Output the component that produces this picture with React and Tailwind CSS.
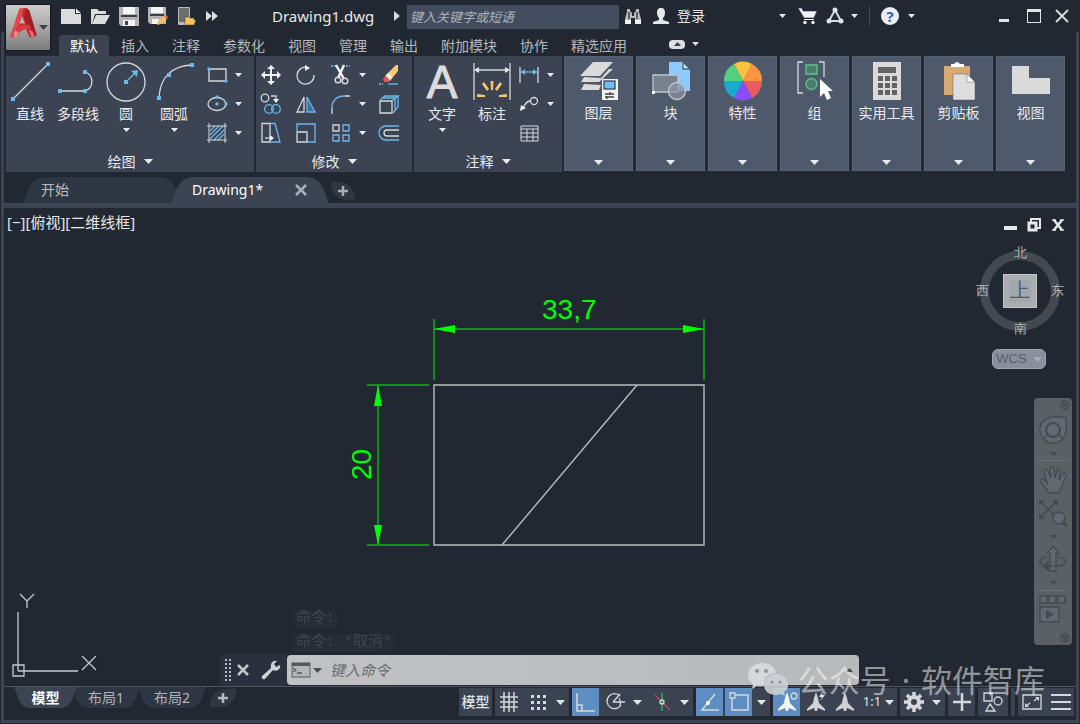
import React, { useState } from 'react';

const BLUE = '#6cb8f0';
const LIGHT = '#d6d8db';

// Shared wrapper for the line icons
function Icon({ w = 22, h = 22, vb, className = '', children }) {
  return (
    <svg
      width={w}
      height={h}
      viewBox={vb || `0 0 ${w} ${h}`}
      fill="none"
      stroke={LIGHT}
      strokeWidth="1.3"
      className={`shrink-0 ${className}`}
      aria-hidden="true"
    >
      {children}
    </svg>
  );
}

function Caret({ big, className = '' }) {
  return (
    <svg width={big ? 9 : 7} height={big ? 5 : 4} viewBox="0 0 10 5" preserveAspectRatio="none" className={`shrink-0 ${className}`} aria-hidden="true">
      <path d="M0 0H10L5 5Z" fill="currentColor" />
    </svg>
  );
}

function Dots({ at, r = 2 }) {
  return at.map(([x, y]) => (
    <rect key={`${x}-${y}`} x={x - r} y={y - r} width={r * 2} height={r * 2} fill={BLUE} stroke="none" />
  ));
}

/* ---------- Title bar icons ---------- */
const quickAccess = [
  {
    name: '新建',
    icon: (
      <Icon w={20} h={20} className="stroke-none">
        <path d="M0 3H14V8H20V18H0Z" fill="#dcdcdc" />
        <path d="M15 2.500L20 7H15Z" fill="#f4f4f4" />
      </Icon>
    ),
  },
  {
    name: '打开',
    icon: (
      <Icon w={20} h={20} className="stroke-none">
        <path d="M1 18V3H7L9 5H16V8H5L2 18Z" fill="#dcdcdc" />
        <path d="M6 9H20L15 18H2Z" fill="#dcdcdc" />
      </Icon>
    ),
  },
  {
    name: '保存',
    icon: (
      <Icon w={20} h={20} className="stroke-none">
        <path d="M0 1H20V20H2L0 18Z" fill="#b4b4b4" />
        <rect x="4" y="1" width="12" height="7" fill="#f5f5f5" />
        <rect x="2" y="9" width="16" height="2" fill="#3a3f48" />
        <rect x="4" y="14" width="12" height="6" fill="#f5f5f5" />
        <rect x="6" y="15" width="3" height="4" fill="#3a3f48" />
      </Icon>
    ),
  },
  {
    name: '另存为',
    icon: (
      <Icon w={20} h={20} className="stroke-none">
        <path d="M0 1H18V18H2L0 16Z" fill="#b4b4b4" />
        <rect x="3" y="1" width="12" height="6" fill="#f5f5f5" />
        <rect x="2" y="8" width="14" height="2" fill="#3a3f48" />
        <rect x="4" y="13" width="7" height="5" fill="#f5f5f5" />
        <path d="M9 19L10 15L16 10L19 13L13 18Z" fill="#f3bf62" />
        <path d="M16 10L18 9L20 11L19 13Z" fill="#e25c5c" />
      </Icon>
    ),
  },
  {
    name: '从移动设备打开',
    icon: (
      <Icon w={20} h={20} className="stroke-none">
        <rect x="1" y="1" width="12" height="18" rx="1" fill="#b8b8b8" />
        <rect x="2" y="2" width="10" height="14" fill="#6d6d6d" />
        <path d="M8 19V11H12L13 12H17V14H19L17 19Z" fill="#f3c263" stroke="#4b3d20" strokeWidth="0.5" />
      </Icon>
    ),
  },
];

function LogoButton() {
  return (
    <button
      aria-label="应用程序菜单"
      className="absolute left-[5px] top-1 z-10 flex h-[47px] w-[46px] items-center border border-[#15181d] bg-linear-to-b from-[#cdcdcd] via-[#a9a9a9] to-[#7b7b7b] pl-[3px]"
    >
      <svg width="30" height="33" viewBox="0 0 32 36" className="mb-2 shrink-0" aria-hidden="true">
        <path d="M11 2L19 1L29 32L22 33L18 24L12 24L8 32L1 33Z" fill="#c32a2f" />
        <path d="M11 2L15 1L14 11L11 20Q6 24 6 33L1 33Z" fill="#e0484b" />
        <path d="M19 1L22 4L30 31L24 33L16 11Z" fill="#a71d24" />
        <path d="M14 10L17 18H11Z" fill="#b6b6b6" />
        <path d="M7 25Q14 17 22 20L24 25Q15 21 8 32L3 33Z" fill="#d93a3f" />
        <path d="M6 26Q4 30 5 33L9 32L10 27Z" fill="#eb8d8b" />
        <path d="M21 25L24 33L28 32L25 26Z" fill="#e2686a" />
      </svg>
      <Caret big className="text-[#3e4248]" />
    </button>
  );
}

function TitleBar() {
  return (
    <header className="flex h-8 items-center pl-[60px] pr-[10px] text-[#e6e8ea]">
      <div className="flex items-center gap-[9px]">
        {quickAccess.map((q) => (
          <button key={q.name} aria-label={q.name}>{q.icon}</button>
        ))}
        <button aria-label="更多">
          <Icon w={12} h={12} className="stroke-none">
            <path d="M0 1L6 6L0 11ZM6 1L12 6L6 11Z" fill="#dcdcdc" />
          </Icon>
        </button>
      </div>
      <h1 className="ml-[54px] w-[122px] shrink-0 text-[15px]">Drawing1.dwg</h1>
      <Icon w={6} h={10} className="stroke-none">
        <path d="M0 0L6 5L0 10Z" fill="#dcdcdc" />
      </Icon>
      <input
        aria-label="搜索"
        placeholder="键入关键字或短语"
        className="ml-[7px] mt-0.5 h-6 w-[212px] bg-[#434b5e] px-[3px] text-[13px] italic outline-none placeholder:text-[#adb2bc]"
      />
      <button aria-label="查找" className="ml-[5px]">
        <Icon w={18} h={18} className="stroke-none">
          <path d="M3 2H6V4L8 6V9H10V6L12 4V2H15V5L17 12V17H11V11H7V17H1V12L3 5Z" fill="#b9bbbe" />
          <path d="M1 13H7V17H1ZM11 13H17V17H11Z" fill="#f0f0f0" />
          <path d="M4 5H6V12H4ZM12 5H14V12H12Z" fill="#5b6068" />
        </Icon>
      </button>
      <button className="ml-[10px] flex items-center gap-[7px] text-sm">
        <Icon w={18} h={18} className="stroke-none">
          <path d="M9 1C12 1 13 3 13 6C13 8 12 10 11 11V13L17 15V17H1V15L7 13V11C6 10 5 8 5 6C5 3 6 1 9 1Z" fill="#e6e7e9" />
        </Icon>
        登录
      </button>
      <div className="ml-auto flex items-center">
        <button aria-label="登录选项"><Caret /></button>
        <button aria-label="应用商店" className="ml-3">
          <Icon w={20} h={18} className="stroke-none">
            <path d="M0 1H4L5 4H19L16 11H6Z" fill="#f2f2f5" stroke="#1c2550" strokeWidth="0.600" />
            <path d="M6 12H16V13H6Z" fill="#f2f2f5" />
            <circle cx="7" cy="15.500" r="1.700" fill="#f2f2f5" />
            <circle cx="15" cy="15.500" r="1.700" fill="#f2f2f5" />
          </Icon>
        </button>
        <button aria-label="Autodesk 链接" className="ml-2 flex items-center gap-[7px]">
          <Icon w={18} h={18} className="stroke-[2]">
            <path d="M9 3L3 14H15Z" />
            <g fill="#dfe3f2" stroke="none"><circle cx="9" cy="3" r="2.500" /><circle cx="3" cy="14" r="2.500" /><circle cx="15" cy="14" r="2.500" /></g>
          </Icon>
          <Caret />
        </button>
        <span className="ml-[11px] h-5 w-px bg-[#454c5b]" />
        <button aria-label="帮助" className="ml-[11px] flex items-center gap-[9px]">
          <span className="flex h-[18px] w-[18px] items-center justify-center rounded-full bg-[#eceef2] text-[15px] font-bold leading-none text-[#2f62b8]">?</span>
          <Caret />
        </button>
        <button aria-label="最小化" className="ml-[84px] mt-2 h-[3px] w-[10px] bg-[#e2e4e6]" />
        <button aria-label="最大化" className="ml-[18px] h-[14px] w-[14px] border border-t-[3px] border-[#e2e4e6]" />
        <button aria-label="关闭" className="ml-[14px]">
          <Icon w={14} h={14} className="stroke-[2]"><path d="M1 1L13 13M13 1L1 13" /></Icon>
        </button>
      </div>
    </header>
  );
}

const ribbonTabs = ['默认', '插入', '注释', '参数化', '视图', '管理', '输出', '附加模块', '协作', '精选应用'];

function RibbonTabs() {
  const [active, setActive] = useState('默认');
  return (
    <nav className="flex h-6 items-end gap-px pl-[55px] text-sm">
      {ribbonTabs.map((t) => (
        <button
          key={t}
          onClick={() => setActive(t)}
          className={`h-[21px] shrink-0 rounded-t-sm px-[11px] leading-5 ${t === active ? 'bg-[#3c4453] text-white' : 'text-[#b4b8be]'}`}
        >
          {t}
        </button>
      ))}
      <button aria-label="功能区显示" className="ml-[30px] flex h-6 items-center gap-[7px] text-[#dcdcdc]">
        <span className="flex h-[9px] w-4 items-center justify-center rounded-sm bg-[#dcdfe3]">
          <Caret className="rotate-180 text-[#3a3f48]" />
        </span>
        <Caret />
      </button>
    </nav>
  );
}

/* ---------- Ribbon ---------- */
function BigTool({ label, icon, caret, className = 'w-12' }) {
  return (
    <button className={`flex flex-col items-center text-sm ${className}`}>
      {icon}
      <span className="mt-0.5 leading-5">{label}</span>
      {caret && <Caret className="mt-1" />}
    </button>
  );
}

function SmallTool({ name, icon, caret }) {
  return (
    <button aria-label={name} className="flex h-[29px] items-center gap-[7px]">
      {icon}
      {caret && <Caret />}
    </button>
  );
}

function Panel({ title, className = '', children }) {
  return (
    <section className={`flex shrink-0 flex-col bg-[#3c4453] ${className}`}>
      <div className="flex flex-1">{children}</div>
      <button className="flex h-[21px] items-center justify-center gap-2 text-sm leading-5">
        {title}
        <Caret big />
      </button>
    </section>
  );
}

const drawTools = [
  {
    label: '直线',
    icon: <Icon w={40} h={40}><path d="M3 37L38 2" /><Dots at={[[3, 37], [38, 2]]} /></Icon>,
  },
  {
    label: '多段线',
    icon: <Icon w={40} h={40}><path d="M2 29H27A10 10 0 0 0 27 10" /><Dots at={[[2, 29], [27, 29], [27, 10]]} /></Icon>,
  },
  {
    label: '圆',
    caret: true,
    icon: (
      <Icon w={40} h={40}>
        <circle cx="20" cy="20" r="19" />
        <path d="M20 20L29 11" stroke={BLUE} />
        <path d="M25 9L32 8L31 15Z" fill={BLUE} stroke="none" />
        <Dots at={[[20, 20]]} />
      </Icon>
    ),
  },
  {
    label: '圆弧',
    caret: true,
    icon: (
      <Icon w={40} h={40}>
        <path d="M5 36C6 15 18 4 38 3" />
        <Dots at={[[5, 36], [15, 13], [38, 3]]} />
      </Icon>
    ),
  },
];

const drawSmall = [
  { name: '矩形', icon: <Icon><path d="M3 5H20V17H3Z" /><Dots at={[[3, 5], [20, 17]]} r={1.5} /></Icon> },
  { name: '椭圆', icon: <Icon><ellipse cx="11" cy="11" rx="9" ry="6.500" /><Dots at={[[11, 4], [11, 11], [20, 11]]} r={1.5} /></Icon> },
  {
    name: '图案填充',
    icon: (
      <Icon>
        <path d="M4 9L9 4M4 13L13 4M4 17L17 4M8 18L18 8M12 18L18 12" stroke={BLUE} />
        <path d="M3 1V21M19 1V21M1 4H21M1 18H21" strokeWidth="1" />
      </Icon>
    ),
  },
];

// Laid out row by row in a four-column grid
const modifyTools = [
  { name: '移动', icon: <Icon className="stroke-none"><path d="M10 5V10H5V7L1 11L5 15V12H10V17H7L11 21L15 17H12V12H17V15L21 11L17 7V10H12V5H15L11 1L7 5Z" fill="#f2f2f2" /></Icon> },
  { name: '旋转', icon: <Icon><path d="M13 3.500A8.500 8.500 0 1 0 19 11" /><path d="M10 1L15 4L10 7Z" fill="#f2f2f2" stroke="none" /></Icon> },
  {
    name: '修剪',
    caret: true,
    icon: (
      <Icon>
        <path d="M1 2H6M13 2H20" stroke={BLUE} strokeDasharray="2 1" />
        <path d="M6 1L14 15M14 1L8 14" strokeWidth="2.500" stroke="#f2f2f2" />
        <circle cx="8" cy="16" r="2.800" strokeWidth="1.500" /><circle cx="15" cy="17" r="2.800" strokeWidth="1.500" />
      </Icon>
    ),
  },
  {
    name: '删除',
    icon: (
      <Icon className="stroke-none">
        <path d="M20 1V7L12 17L7 12L18 1Z" fill="#f6cd76" />
        <path d="M10 9L14 13L11 17L7 13Z" fill="#f4f4f4" />
        <path d="M8 12L12 16L10 18H6L5 15Z" fill="#e8575c" />
        <path d="M1 20H5" stroke="#aaa" strokeDasharray="2 1" /><path d="M10 20H20" stroke={BLUE} />
      </Icon>
    ),
  },
  {
    name: '复制',
    icon: (
      <Icon>
        <circle cx="5" cy="5" r="3.800" /><path d="M11 3H16V7" /><path d="M13 6H19L16 10Z" fill="#f2f2f2" stroke="none" />
        <circle cx="9" cy="16" r="4.300" stroke={BLUE} /><circle cx="16" cy="16" r="4.300" stroke={BLUE} />
      </Icon>
    ),
  },
  { name: '镜像', icon: <Icon><path d="M9 4V19H2Z" /><path d="M12 4V19H20Z" stroke={BLUE} fill="#3f6d92" /></Icon> },
  { name: '圆角', caret: true, icon: <Icon><path d="M2 21V15M15 3H20" /><path d="M2 15C2 7 7 3 15 3" stroke={BLUE} /></Icon> },
  {
    name: '分解',
    icon: <Icon><path d="M2 8H14V20H2Z" /><path d="M2 7L7 3H20L14 8M20 3V14L15 20M17 6V17M5 5H17" stroke={BLUE} /></Icon>,
  },
  {
    name: '拉伸',
    icon: <Icon><path d="M10 1.500H2V20H10Z" /><path d="M10 1.500H15L20 20H10" stroke={BLUE} /><path d="M5 16H11" /><path d="M10 13L14 16L10 19Z" fill="#f2f2f2" stroke="none" /></Icon>,
  },
  { name: '缩放', icon: <Icon><path d="M2 9V2H20V20H12" stroke={BLUE} /><path d="M2 10H12V20H2Z" /></Icon> },
  {
    name: '阵列',
    caret: true,
    icon: <Icon><path d="M3 3H9V9H3Z" /><path d="M13 3H19V9H13ZM3 13H9V19H3ZM13 13H19V19H13Z" stroke={BLUE} /></Icon>,
  },
  {
    name: '偏移',
    icon: <Icon><path d="M21 4H8A7 7 0 0 0 8 18H21" stroke={BLUE} /><path d="M21 8H9A3 3 0 0 0 9 14H21" /></Icon>,
  },
];

const annotateSmall = [
  {
    name: '线性标注',
    caret: true,
    icon: <Icon><path d="M2 3V19M20 3V19" /><path d="M3 8H19" stroke={BLUE} /><path d="M3 8L7 5V11ZM19 8L15 5V11Z" fill={BLUE} stroke="none" /></Icon>,
  },
  {
    name: '引线',
    caret: true,
    icon: <Icon><circle cx="16" cy="8" r="3.500" /><path d="M12 8C8 8 8 11 4 16" /><path d="M2 18L3 12L8 15Z" fill="#f2f2f2" stroke="none" /></Icon>,
  },
  { name: '表格', icon: <Icon><path d="M3 4H20V19H3ZM3 7H20M3 11H20M3 15H20M9 7V19M15 7V19" strokeWidth="1" /></Icon> },
];

const WHEEL = [
  ['M20 20L11 3A19 19 0 0 1 29 3Z', '#ffc23f'],
  ['M20 20L29 3A19 19 0 0 1 39 20Z', '#ff9443'],
  ['M20 20H39A19 19 0 0 1 29 37Z', '#e85b5f'],
  ['M20 20L29 37A19 19 0 0 1 11 37Z', '#8a4dfc'],
  ['M20 20L11 37A19 19 0 0 1 1 20Z', '#15acd0'],
  ['M20 20H1A19 19 0 0 1 11 3Z', '#52d080'],
];

const collapsed = [
  {
    label: '图层',
    icon: (
      <Icon w={40} h={40} className="stroke-none">
        <path d="M14 1H34L21 15H1ZM5 16L2 21H20L34 8H30L22 17ZM5 23L2 29H20L22 24Z" fill="#dadada" />
        <rect x="23" y="18" width="16" height="21" fill="#f2f2f2" />
        <rect x="25" y="20" width="11" height="8" fill="#6cbcfa" stroke="#3d4655" />
        <path d="M26 33H35M26 36H35M31 31V34M28 35V38" stroke="#444" />
      </Icon>
    ),
  },
  {
    label: '块',
    icon: (
      <Icon w={40} h={40} className="stroke-none">
        <path d="M18 1H32L39 8V30H18Z" fill="#8ccaff" />
        <path d="M32 1V8H39Z" fill="#cfe8ff" stroke="#47617a" />
        <path d="M2 14H27V31H2Z" fill="#778291" stroke="#c2c5ca" />
        <circle cx="26" cy="30" r="8.500" fill="#8a94a0" fillOpacity="0.7" stroke="#c2c5ca" />
        <rect x="1" y="30" width="3" height="3" fill="#fff" />
      </Icon>
    ),
  },
  {
    label: '特性',
    icon: (
      <Icon w={40} h={40} className="stroke-none">
        {WHEEL.map(([d, c]) => <path key={c} d={d} fill={c} />)}
      </Icon>
    ),
  },
  {
    label: '组',
    icon: (
      <Icon w={40} h={40}>
        <path d="M8 1H3V32H8M24 1H29V16" />
        <path d="M11 4H22V13H11Z" stroke="#58c98b" fill="#4f7a70" />
        <circle cx="16.500" cy="23" r="5.500" stroke="#58c98b" fill="#4f7a70" />
        <path d="M25 18L38 30H33L36 37L32 39L29 32L25 36Z" fill="#fff" stroke="none" />
      </Icon>
    ),
  },
  {
    label: '实用工具',
    icon: (
      <Icon w={40} h={40} className="stroke-none">
        <rect x="6" y="1" width="28" height="38" fill="#dadada" />
        <path d="M11 6H29V12H11ZM11 15H16V20H11ZM18 15H23V20H18ZM25 15H30V20H25ZM11 22H16V27H11ZM18 22H23V27H18ZM25 22H30V27H25ZM11 29H16V34H11ZM18 29H23V34H18ZM25 29H30V34H25Z" fill="#636363" />
      </Icon>
    ),
  },
  {
    label: '剪贴板',
    icon: (
      <Icon w={40} h={40} className="stroke-none">
        <rect x="5" y="5" width="26" height="29" fill="#d8a970" />
        <path d="M12 6V3H15Q18 -1 21 3H25V6Z" fill="#fff" />
        <path d="M14 13H28L36 21V39H14Z" fill="#dedede" stroke="#5b5f66" strokeWidth="0.500" />
        <path d="M28 13V21H36Z" fill="#fff" stroke="#5b5f66" strokeWidth="0.500" />
      </Icon>
    ),
  },
  {
    label: '视图',
    icon: <Icon w={40} h={40} className="stroke-none"><path d="M1 5H18V17H39V33H1Z" fill="#dadada" /></Icon>,
  },
];

function Ribbon() {
  return (
    <div className="flex h-[116px] gap-0.5 pl-0.5 text-[#e8eaec]">
      <Panel title="绘图" className="w-[248px]">
        <div className="flex pt-1.5">
          {drawTools.map((t) => <BigTool key={t.label} {...t} />)}
        </div>
        <div className="flex flex-col pl-2 pt-1">
          {drawSmall.map((t) => <SmallTool key={t.name} caret {...t} />)}
        </div>
      </Panel>
      <Panel title="修改" className="w-[156px]">
        <div className="grid grid-cols-[35px_35px_48px_22px] content-start pl-1 pt-1">
          {modifyTools.map((t) => <SmallTool key={t.name} {...t} />)}
        </div>
      </Panel>
      <Panel title="注释" className="w-[148px]">
        <div className="flex pt-1.5">
          <BigTool
            label="文字"
            caret
            className="w-14"
            icon={
              <span className="flex h-10 items-center font-['Liberation_Sans',sans-serif] text-[46px] leading-10 text-[#dcdcdc] [-webkit-text-stroke:1px_#dcdcdc]">
                A
              </span>
            }
          />
          <BigTool
            label="标注"
            className="w-11"
            icon={
              <Icon w={40} h={40}>
                <path d="M2 1V38M38 1V38M4 8H36" />
                <path d="M2 8L7 5V11ZM38 8L33 5V11Z" fill="#e6e6e6" stroke="none" />
                <path d="M18.500 19H21.500L21 28H19ZM10 22L12 20L17 27L15 29ZM30 22L28 20L23 27L25 29ZM5 32L13 33V35H5ZM35 32L27 33V35H35Z" fill="#f6c667" stroke="none" />
              </Icon>
            }
          />
        </div>
        <div className="flex flex-col pl-1 pt-1">
          {annotateSmall.map((t) => <SmallTool key={t.name} {...t} />)}
        </div>
      </Panel>
      <div className="flex gap-[3px] pb-px">
        {collapsed.map((p) => (
          <button key={p.label} className="flex w-[69px] shrink-0 flex-col items-center border border-[#566174] bg-[#4e596c] pb-[5px] pt-1 text-sm">
            {p.icon}
            <span className="mt-0.5 leading-5">{p.label}</span>
            <Caret big className="mt-auto" />
          </button>
        ))}
      </div>
    </div>
  );
}

/* ---------- File tabs ---------- */
// The slanted sides are two overlapping skewed halves behind the label
function FileTabs() {
  return (
    <div className="flex h-9 items-end border-b-[5px] border-[#3c4453] pl-6 text-sm">
      <button className="relative h-[26px] w-[148px] pl-[13px] text-left text-[#b9bdc3] before:absolute before:inset-y-0 before:left-0 before:w-3/5 before:-skew-x-[20deg] before:rounded-tl-xl before:bg-[#2f3643] after:absolute after:inset-y-0 after:right-0 after:w-3/5 after:rounded-tr-2xl after:bg-[#2f3643]">
        <span className="relative z-10">开始</span>
      </button>
      <div className="relative flex h-[26px] w-[148px] items-center pl-4 pr-[17px] text-white before:absolute before:inset-y-0 before:left-0 before:w-3/5 before:-skew-x-[20deg] before:rounded-tl-xl before:bg-[#3c4453] after:absolute after:inset-y-0 after:right-0 after:w-3/5 after:skew-x-[20deg] after:rounded-tr-xl after:bg-[#3c4453]">
        <button className="relative z-10 shrink-0">Drawing1*</button>
        <button aria-label="关闭图形" className="relative z-10 ml-auto">
          <Icon w={12} h={12} className="stroke-[#a9aeb6] stroke-[2.5]"><path d="M1 1L11 11M11 1L1 11" /></Icon>
        </button>
      </div>
      <button aria-label="新图形" className="mb-[3px] ml-[7px] flex h-[18px] w-6 items-center justify-center rounded-bl-2xl rounded-tr-2xl bg-[#303743]">
        <Icon w={10} h={10} className="stroke-[#a9aeb6] stroke-[2.5]"><path d="M5 0V10M0 5H10" /></Icon>
      </button>
    </div>
  );
}

/* ---------- Drawing area ---------- */
function Drawing() {
  return (
    <svg width="370" height="260" viewBox="345 295 370 260" className="absolute left-[341px] top-[87px]" fill="none">
      <g stroke="#b9bbbf" strokeWidth="1.400">
        <path d="M434 385H704V545H434Z" />
        <path d="M502 545L637 385" />
      </g>
      <g stroke="#0cb414" strokeWidth="1.400">
        <path d="M434 319V380M704 319V380M434 329H704" />
        <path d="M367 385H429M367 545H429M378 385V545" />
      </g>
      <g fill="#00ff00">
        <path d="M434 329L455 325V333ZM704 329L683 325V333ZM378 385L374 406H382ZM378 545L374 525H382Z" />
        <g fontFamily="Liberation Sans, Arial, sans-serif" fontSize="28">
          <text x="542" y="319">33,7</text>
          <text transform="translate(371 480) rotate(-90)">20</text>
        </g>
      </g>
    </svg>
  );
}

function ViewCube() {
  return (
    <div className="absolute right-3 top-9 flex w-[88px] flex-col items-center font-serif">
      <div className="relative flex h-[94px] w-[88px] items-center justify-center text-[13px] text-[#b3b6ba]">
        <div className="flex h-20 w-20 items-center justify-center rounded-full border-[9px] border-[#434950]">
          <button className="flex h-[34px] w-[34px] items-center justify-center border border-[#c4c4c4] bg-[#abadae] text-[20px] leading-none text-[#54585c]">
            <span className="flex h-[22px] w-[22px] items-center justify-center bg-[#a0a8ae]">上</span>
          </button>
        </div>
        <span className="absolute top-0 leading-[18px]">北</span>
        <span className="absolute bottom-0 leading-[18px]">南</span>
        <span className="absolute left-0">西</span>
        <span className="absolute right-0">东</span>
      </div>
      <button className="mr-0.5 mt-[11px] flex h-5 w-[54px] items-center justify-center gap-1.5 rounded-md border border-[#a2a5b2] bg-[#8a8e9d] font-['Liberation_Sans',sans-serif] text-[13px] text-[#5c606c]">
        WCS
        <Caret big className="text-[#a9acb9]" />
      </button>
    </div>
  );
}

function NavBar() {
  return (
    <div className="absolute right-1 top-[190px] flex h-[247px] w-[38px] flex-col items-center rounded-sm bg-[#5b6064] text-[#454a52]">
      <button aria-label="关闭导航栏" className="mr-0.5 mt-0.5 self-end">
        <Icon w={10} h={10} className="stroke-[#454a52]"><circle cx="5" cy="5" r="4" /><path d="M3 3L7 7M7 3L3 7" /></Icon>
      </button>
      <button aria-label="全导航控制盘" className="mt-1.5 flex flex-col items-center gap-2">
        <Icon w={28} h={28} className="stroke-[#454a52]">
          <path d="M14 1H27V14A13 13 0 1 1 14 1Z" fill="#626770" /><circle cx="14" cy="14" r="7" strokeWidth="2" /><path d="M5 22L9 18M23 22L19 18" />
        </Icon>
        <Caret />
      </button>
      <hr className="my-1 w-[30px] border-[#6b7074]" />
      <button aria-label="平移">
        <Icon w={28} h={30} className="stroke-[#454a52]">
          <path d="M10 28L2 17C0 14 3 13 5 15L8 18L5 7C4 4 8 3 9 6L12 13L11 4C11 1 15 1 15 4L16 13L18 5C19 2 22 3 21 6L20 15L24 9C26 7 28 9 27 11L21 26L19 28Z" fill="#626770" />
        </Icon>
      </button>
      <button aria-label="缩放" className="mt-1 flex flex-col items-center gap-2">
        <Icon w={30} h={28} className="stroke-[#454a52]">
          <path d="M3 3L18 18M18 3L3 18" strokeWidth="1.500" /><path d="M1 1H7L1 7ZM20 1H14L20 7ZM1 20V14L7 20Z" fill="#454a52" stroke="none" />
          <circle cx="21" cy="19" r="6" fill="#626770" strokeWidth="1.500" /><path d="M25 23L29 27" strokeWidth="3" />
        </Icon>
        <Caret />
      </button>
      <button aria-label="动态观察" className="mt-1.5 flex flex-col items-center gap-2">
        <Icon w={28} h={28} className="stroke-[#454a52]">
          <path d="M11 26V8H8L14 1L20 8H17V26Z" fill="#626770" />
          <path d="M20 12C30 14 29 21 17 21H6M8 12C0 13 -1 18 4 20" strokeWidth="1.500" /><path d="M4 21L9 17V25Z" fill="#454a52" />
        </Icon>
        <Caret />
      </button>
      <hr className="mb-1 mt-[5px] w-[30px] border-[#6b7074]" />
      <button aria-label="运动演示">
        <Icon w={28} h={28} className="stroke-[#454a52]">
          <path d="M1 1H8V8H1ZM10 1H17V8H10ZM19 1H26V8H19ZM1 12H20V27H1Z" fill="#626770" strokeWidth="1.500" /><path d="M7 15V24L15 19.500Z" fill="#454a52" stroke="none" />
        </Icon>
      </button>
      <button aria-label="导航栏选项" className="mb-0.5 mr-0.5 mt-auto self-end">
        <Icon w={10} h={10} className="stroke-[#454a52]"><circle cx="5" cy="5" r="4" /><path d="M3 4H7L5 7Z" /></Icon>
      </button>
    </div>
  );
}

function CommandLine() {
  return (
    <div className="absolute bottom-0 left-[216px] right-[217px]">
      <div className="flex flex-col items-start gap-1.5 pb-0.5 pl-[73px] font-['Liberation_Mono','Noto_Sans_CJK_SC',monospace] text-[15px] leading-[18px] text-[#3f454e]">
        <p className="rounded-sm bg-[#262c35] px-[3px]">命令:</p>
        <p className="whitespace-pre rounded-sm bg-[#262c35] px-[3px]">命令: *取消*</p>
      </div>
      <div className="flex h-8">
        <div className="flex w-[67px] shrink-0 items-center rounded-tl bg-[#2a303d] pl-1">
          <Icon w={8} h={22} className="stroke-none">
            {[1, 5, 9, 13, 17, 21].map((y) => <path key={y} d={`M1 ${y - 1}H3V${y + 1}H1ZM5 ${y - 1}H7V${y + 1}H5Z`} fill="#b5b8bd" />)}
          </Icon>
          <button aria-label="关闭命令行" className="ml-[5px]">
            <Icon w={12} h={12} className="stroke-[#c3c6cb] stroke-[2.5]"><path d="M1 1L11 11M11 1L1 11" /></Icon>
          </button>
          <button aria-label="自定义" className="ml-3">
            <Icon w={20} h={20} className="stroke-none">
              <path d="M1 16L10 8C9 3 12 0 16 1L13 4L15 7L19 5C20 9 16 12 12 10L4 19C2 20 0 18 1 16Z" fill="#cfd1d4" />
            </Icon>
          </button>
        </div>
        <div className="mb-px mt-px flex flex-1 items-center rounded-sm bg-linear-to-r from-[#c1c2c4] to-[#b8b9bb] pl-1 pr-1.5 text-[#4b4f55]">
          <button aria-label="最近使用的命令" className="flex items-center gap-0.5">
            <Icon w={20} h={16}>
              <path d="M1 1H19V15H1Z" stroke="#777" fill="#b4b5b7" /><path d="M1 1H19V4H1Z" fill="#55585d" stroke="none" /><path d="M2 6L5 8L2 10M6 11H11" stroke="#55585d" />
            </Icon>
            <Caret big />
          </button>
          <input aria-label="命令" placeholder="键入命令" className="ml-2 min-w-0 flex-1 bg-transparent text-[15px] italic outline-none placeholder:text-[#696c71]" />
          <Caret className="rotate-180" />
        </div>
      </div>
    </div>
  );
}

function Viewport() {
  return (
    <main className="relative min-h-[440px] flex-1 overflow-hidden">
      <div className="absolute left-[3px] top-1 text-[15px] leading-5 text-[#e4e6e8]">[−][俯视][二维线框]</div>
      <div className="absolute right-3 top-[10px] flex h-[14px] items-center">
        <button aria-label="最小化视口" className="mt-1.5 h-1 w-[13px] bg-[#e8e8e8]" />
        <button aria-label="还原视口" className="ml-2.5">
          <Icon w={14} h={14} className="stroke-[#e8e8e8] stroke-[2]"><path d="M4 4V1H13V10H10" /><path d="M2 5H9V12H2Z" strokeWidth="3" /></Icon>
        </button>
        <button aria-label="关闭视口" className="ml-[11px]">
          <Icon w={12} h={12} className="stroke-[#e8e8e8]"><path d="M2 1L10 11M10 1L2 11" strokeWidth="2.500" /><path d="M0 1H4M8 1H12M0 11H4M8 11H12" strokeWidth="1.500" /></Icon>
        </button>
      </div>
      <Drawing />
      <ViewCube />
      <NavBar />
      {/* UCS origin marker */}
      <svg width="90" height="90" viewBox="0 0 90 90" className="absolute bottom-[3px] left-2" fill="none" stroke="#c6c8cb" strokeWidth="1.300">
        <path d="M1 72H12V83H1Z M6 78V19 M6 78H66" />
        <path d="M8 1L15 8L22 1M15 8V15M70 63L84 77M84 63L70 77" />
      </svg>
      <CommandLine />
    </main>
  );
}

/* ---------- Bottom bar ---------- */
function LayoutTab({ label, active, className }) {
  const tone = active
    ? 'font-bold text-white before:bg-[#3c4453] after:bg-[#3c4453]'
    : 'text-[#b0b4ba] before:bg-[#2f3643] after:bg-[#2f3643]';
  return (
    <button
      className={`relative h-[21px] shrink-0 text-sm leading-5 before:absolute before:inset-y-0 before:left-0 before:w-3/5 before:skew-x-[20deg] before:rounded-bl-lg after:absolute after:inset-y-0 after:right-0 after:w-3/5 after:-skew-x-[20deg] after:rounded-br-lg ${tone} ${className}`}
    >
      <span className="relative z-10">{label}</span>
    </button>
  );
}

function StatusButton({ name, on, children }) {
  return (
    <button aria-label={name} className={`flex h-7 w-[27px] shrink-0 items-center justify-center ${on ? 'bg-[#5c8dc3]' : ''}`}>
      {children}
    </button>
  );
}

function StatusCaret({ name }) {
  return (
    <button aria-label={name} className="flex h-7 w-[18px] shrink-0 items-center justify-center">
      <Caret big />
    </button>
  );
}

function Group({ children, className = 'gap-0.5' }) {
  return <div className={`flex h-7 shrink-0 bg-[#3b4352] ${className}`}>{children}</div>;
}

const person = 'M11 1L13 7L14 12L20 18V20L13 17L12 20H10L9 17L2 20V18L8 12L9 7Z';

function StatusBar() {
  return (
    <div className="ml-auto flex gap-[3px] pr-0.5 pt-px text-[#e3e5e7]">
      <Group><button className="w-[33px] text-sm font-medium">模型</button></Group>
      <Group>
        <StatusButton name="栅格"><Icon w={20} h={20} className="stroke-[1.5]"><path d="M5 0V20M10 0V20M15 0V20M1 5H19M1 10H19M1 15H19" /></Icon></StatusButton>
        <div className="flex">
          <StatusButton name="捕捉模式">
            <Icon w={16} h={16} className="stroke-none">
              {[1, 7, 13].map((y) => <path key={y} d={`M1 ${y}H4V${y + 3}H1ZM7 ${y}H10V${y + 3}H7ZM13 ${y}H16V${y + 3}H13Z`} fill="#d6d8db" />)}
            </Icon>
          </StatusButton>
          <StatusCaret name="捕捉设置" />
        </div>
      </Group>
      <Group>
        <StatusButton name="正交" on><Icon w={20} h={20}><path d="M1 1V19H19M1 13H6V19" strokeWidth="1.500" /></Icon></StatusButton>
        <div className="flex">
          <StatusButton name="极轴追踪"><Icon w={20} h={20}><path d="M15 4A7.500 7.500 0 1 0 16 13" /><path d="M8 10L15 2M8 10H20M14 6Q16 9 15 14" /></Icon></StatusButton>
          <StatusCaret name="极轴设置" />
        </div>
        <div className="flex">
          <StatusButton name="等轴测草图"><Icon w={20} h={20}><path d="M3 3L18 18" stroke="#b4515c" /><path d="M10 1V19" stroke="#3f8d55" strokeWidth="2" /><circle cx="10" cy="10" r="2" /></Icon></StatusButton>
          <StatusCaret name="等轴测设置" />
        </div>
      </Group>
      <Group>
        <StatusButton name="对象捕捉追踪" on><Icon w={20} h={20}><path d="M19 18H2L15 2" strokeWidth="1.500" /><circle cx="8" cy="11" r="2" fill="#fff" stroke="none" /></Icon></StatusButton>
        <div className="flex">
          <StatusButton name="对象捕捉" on><Icon w={20} h={20}><path d="M6 3H19V18H3V6" strokeWidth="1.500" /><path d="M1 1H6V6H1Z" /></Icon></StatusButton>
          <StatusCaret name="对象捕捉设置" />
        </div>
      </Group>
      <Group>
        <StatusButton name="注释可见性" on><Icon className="stroke-none"><path d={person} fill="#f4f4f4" /><circle cx="18" cy="5" r="3" stroke={LIGHT} /></Icon></StatusButton>
        <StatusButton name="自动缩放"><Icon className="stroke-none"><path d={person} fill="#cfd1d4" /><path d="M18 0L14 6H17L15 10L20 4H17Z" fill="#e8e8e8" /></Icon></StatusButton>
        <StatusButton name="注释"><Icon className="stroke-none"><path d={person} fill="#cfd1d4" /></Icon></StatusButton>
        <button className="flex w-[37px] items-center justify-center gap-1 text-[13px]">1:1<Caret big /></button>
      </Group>
      <Group className="gap-0">
        <StatusButton name="工作空间">
          <Icon w={20} h={20}>
            <circle cx="10" cy="10" r="5" strokeWidth="4" />
            <path d="M10 0V4M10 16V20M0 10H4M16 10H20M3 3L6 6M14 14L17 17M17 3L14 6M6 14L3 17" strokeWidth="3.500" />
          </Icon>
        </StatusButton>
        <StatusCaret name="切换工作空间" />
      </Group>
      <Group><StatusButton name="注释监视器"><Icon w={18} h={18} className="stroke-[2.5]"><path d="M9 0V18M0 9H18" /></Icon></StatusButton></Group>
      <Group className="w-[30px] justify-center">
        <StatusButton name="隔离对象"><Icon w={20} h={20}><path d="M1 1H9V9H1ZM7 12L12 19H3Z" /><circle cx="15" cy="9" r="4" /></Icon></StatusButton>
      </Group>
      <Group className="w-1" />
      <Group>
        <StatusButton name="全屏显示">
          <Icon w={20} h={16}><path d="M1 1H19V15H1Z" /><path d="M12 7L16 4M8 9L4 12" /><path d="M13 3H17V7ZM3 9V13H7Z" fill={LIGHT} stroke="none" /></Icon>
        </StatusButton>
        <StatusButton name="自定义"><Icon w={20} h={18} className="stroke-[2]"><path d="M0 2H20M0 9H20M0 16H20" /></Icon></StatusButton>
      </Group>
    </div>
  );
}

function Watermark() {
  return (
    <div className="pointer-events-none absolute bottom-[22px] right-[35px] flex items-center text-[31px] leading-[44px] text-white/50">
      <svg width="42" height="36" viewBox="0 0 42 36" className="mr-[9px]" aria-hidden="true">
        <path d="M15 1C7 1 1 6 1 13C1 17 3 20 6 22L5 27L10 24Q14 25 17 24C16 16 21 11 29 11C28 5 22 1 15 1Z" fill="#d9dbde" fillOpacity="0.9" />
        <path d="M29 12C22 12 17 17 17 23C17 29 22 33 29 33Q32 33 34 32L38 34L37 30C40 28 41 26 41 23C41 17 36 12 29 12Z" fill="#cdd0d4" fillOpacity="0.9" />
        <g fill="#8e9297"><circle cx="10" cy="9" r="2" /><circle cx="19" cy="9" r="2" /><circle cx="25" cy="20" r="1.600" /><circle cx="33" cy="20" r="1.600" /></g>
      </svg>
      <span>公众号</span>
      <span className="mx-[11px]">·</span>
      <span>软件智库</span>
    </div>
  );
}

export default function App() {
  return (
    <div className="relative flex min-h-screen flex-col bg-[#222831] px-px pb-px font-['Noto_Sans','Noto_Sans_CJK_SC',sans-serif]">
      <LogoButton />
      <TitleBar />
      <div className="flex flex-1 flex-col border-x-[3px] border-b-[3px] border-[#3c4353]">
        <RibbonTabs />
        <Ribbon />
        <FileTabs />
        <Viewport />
        <footer className="flex h-[34px] border-t border-[#50545a] pl-3.5">
          <LayoutTab label="模型" active className="z-10 w-[55px]" />
          <LayoutTab label="布局1" className="ml-[3px] w-[60px]" />
          <LayoutTab label="布局2" className="ml-1.5 w-[60px]" />
          <button aria-label="新建布局" className="ml-2 mt-0.5 flex h-[18px] w-[26px] items-center justify-center rounded-br-2xl rounded-tl-2xl bg-[#303743]">
            <Icon w={10} h={10} className="stroke-[#b5b8bd] stroke-[2.5]"><path d="M5 0V10M0 5H10" /></Icon>
          </button>
          <StatusBar />
        </footer>
      </div>
      <Watermark />
    </div>
  );
}
